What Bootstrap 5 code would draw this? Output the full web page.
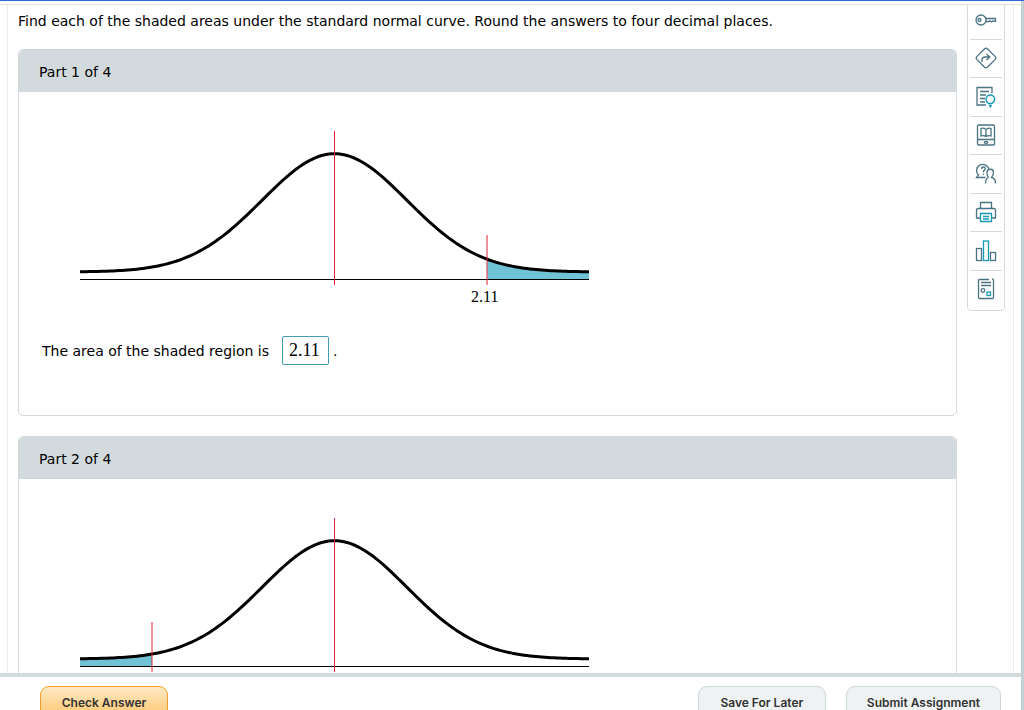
<!DOCTYPE html>
<html lang="en">
<head>
<meta charset="utf-8">
<meta name="viewport" content="width=device-width, initial-scale=1">
<title>Standard normal curve</title>
<link href="https://cdn.jsdelivr.net/npm/bootstrap@5.3.0/dist/css/bootstrap.min.css" rel="stylesheet">
<style>
  :root { --line: #d1dadd; --ink: #4b7482; --teal: #1799b5; }
  body { font-family: "DejaVu Sans", sans-serif; font-size: 14px; line-height: 20px; color: #000; border-top: 1px solid #2a6ad0; }
  .shell { border-right: 3px solid #c3d1d5; }
  .pane { margin-top: 3px; border-top: 1px solid #dfe1e4; min-height: 0; }
  .sheet { margin: 0 7px; border: solid #e6ecec; border-width: 0 1px; }
  .problem { padding: 6px 10px 0 10px; min-width: 0; }
  .question { padding-bottom: 18px; }
  .part { border-color: var(--line); border-radius: 5px; margin-bottom: 20px; }
  .part .card-header { background: #d2dadd; border-bottom: 0; padding: 12px 20px 10px; }
  .part .card-body { padding: 39px 23px 50px; }
  .plot { margin-left: 38px; max-width: 100%; }
  .plot text { font: 16px "Liberation Serif", serif; }
  .reply { margin-top: 30px; }
  .reply label { margin-right: 13px; }
  .reply input { width: 47px; height: 29px; font: 18px "Liberation Serif", serif; padding: 0 6px; border: 1px solid #439cae; border-radius: 2px; color: #000; background: #fff; }
  .tools { width: 38px; height: 311px; margin: -5px 8px 0 0; padding: 0 2px 2px; border: 1px solid var(--line); border-radius: 4px; }
  .tools button { border: 0; border-bottom: 1px solid var(--line); background: none; padding: 0; }
  .tools button:last-child { border-bottom: 0; }
  .tools svg { fill: none; stroke: var(--ink); stroke-width: 1.3; }
  .tools .hi { stroke: var(--teal); }
  .actions { height: 37px; border-top: 4px solid #d1dadd; padding: 9px 20px 0 40px; gap: 20px; }
  .act { font: 600 12px/14px "Inter", sans-serif; color: #333; min-width: 128px; height: 34px; padding: 0 20px; border: 1px solid #cdd7da; border-radius: 9px; background: #eef2f3; }
  .act.go { border-color: #f79d2c; background: linear-gradient(#ffe9c6, #fdc566); }
</style>
</head>
<body class="vh-100 overflow-hidden">
<div class="shell d-flex flex-column h-100">
  <main class="pane flex-fill overflow-hidden">
    <div class="sheet d-flex">
      <section class="problem flex-fill">
        <p class="mb-0 question">Find each of the shaded areas under the standard normal curve. Round the answers to four decimal places.</p>

        <article class="card part">
          <div class="card-header">Part 1 of 4</div>
          <div class="card-body">
            <svg class="plot d-block" width="509" height="175" viewBox="80 131 509 175" data-from="2.11" data-to="3.52" role="img" aria-label="Normal curve shaded to the right of 2.11">
              <path class="area" fill="#6fc3d5"/>
              <path d="M80 279.500H589" stroke="#000"/>
              <path class="curve" fill="none" stroke="#000" stroke-width="3"/>
              <path d="M334.500 131V285" stroke="#e0243b"/>
              <path d="M487 235V285" stroke="#e0243b"/>
              <text x="471" y="302">2.11</text>
            </svg>
            <div class="reply d-flex align-items-center">
              <label for="area1">The area of the shaded region is</label>
              <input id="area1" class="me-1" type="text" value="2.11">.
            </div>
          </div>
        </article>

        <article class="card part">
          <div class="card-header">Part 2 of 4</div>
          <div class="card-body">
            <svg class="plot d-block" width="509" height="175" viewBox="80 131 509 175" data-from="-3.52" data-to="-2.52" role="img" aria-label="Normal curve shaded in the left tail">
              <path class="area" fill="#6fc3d5"/>
              <path d="M80 279.500H589" stroke="#000"/>
              <path class="curve" fill="none" stroke="#000" stroke-width="3"/>
              <path d="M334.500 131V285" stroke="#e0243b"/>
              <path d="M152 235V285" stroke="#e0243b"/>
            </svg>
          </div>
        </article>
      </section>

      <nav class="tools d-flex flex-column flex-shrink-0" aria-label="Assignment tools">
        <button class="flex-fill d-flex align-items-center justify-content-center" aria-label="Answer key"><svg width="22" height="22" viewBox="0 0 22 22"><circle cx="6" cy="11" r="5"/><circle cx="4.500" cy="11" r="1.500"/><path d="M10.500 9.500H20.500V12.300H19.500L18 11.800L16.500 13L15 11.800L13.500 12.500H10.500"/></svg></button>
        <button class="flex-fill d-flex align-items-center justify-content-center" aria-label="Go to"><svg width="22" height="22" viewBox="0 0 22 22"><path d="M9.600 1.800Q11 .6 12.400 1.800L20.200 9.600Q21.400 11 20.200 12.400L12.400 20.200Q11 21.400 9.600 20.200L1.800 12.400Q.6 11 1.800 9.600Z"/><path d="M7 15V13Q7 10 10 10H14.500M11.500 7L14.800 10L11.500 13"/></svg></button>
        <button class="flex-fill d-flex align-items-center justify-content-center" aria-label="Hint"><svg width="22" height="22" viewBox="0 0 22 22"><path d="M17 7V1.500H2V19H11M5 5.500H14M5 9H11M5 12.500H10M5 16H10"/><path class="hi" stroke-width="1.500" d="M13.500 17.500Q11 15.500 11 13.200A4.300 4.300 0 0 1 19.600 13.200Q19.600 15.500 17 17.500Z"/><path class="hi" d="M14 19.500H16.700M14.500 20.800H16.200"/></svg></button>
        <button class="flex-fill d-flex align-items-center justify-content-center" aria-label="eBook"><svg width="22" height="22" viewBox="0 0 22 22"><rect x="2.500" y="1" width="17" height="20" rx="1"/><path d="M2.500 15.500H19.500M11 5.500V12.500M11 5.500Q8.500 3.500 6 4.500V12Q8.500 11 11 12.500Q13.500 11 16 12V4.500Q13.500 3.500 11 5.500"/><ellipse cx="11" cy="18.300" rx="1.800" ry="1"/></svg></button>
        <button class="flex-fill d-flex align-items-center justify-content-center" aria-label="Ask instructor"><svg width="22" height="22" viewBox="0 0 22 22"><path d="M13.800 6A6.200 6.200 0 1 0 3.500 12L1.500 14.500H10.500"/><path d="M6.500 6Q6.500 4 8.300 4Q10.200 4 10.200 5.800Q10.200 7 8.500 8V9.500M8.500 10.800V12"/><path d="M13.500 14.500Q11.500 12 12 9A3.300 3.300 0 0 1 18.500 9Q18.500 12 16.500 14.500Q20.500 15 20.500 20.500M13.500 14.500Q10.500 15.500 10.500 20.500"/></svg></button>
        <button class="flex-fill d-flex align-items-center justify-content-center" aria-label="Print"><svg width="22" height="22" viewBox="0 0 22 22"><path d="M5.500 7.500V1.500H16.500V7.500M5 17H1.500V9Q1.500 7.500 3 7.500H19Q20.500 7.500 20.500 9V17H17"/><path class="hi" d="M5.500 12.500H16.500V20.500H5.500ZM8 15.500H14M8 18H14"/></svg></button>
        <button class="flex-fill d-flex align-items-center justify-content-center" aria-label="Statistics"><svg width="22" height="22" viewBox="0 0 22 22"><rect x="1.500" y="8.500" width="5" height="12"/><rect class="hi" x="8.500" y="1" width="5" height="19.500"/><rect x="15.500" y="12.500" width="5" height="8"/></svg></button>
        <button class="flex-fill d-flex align-items-center justify-content-center" aria-label="Formula sheet"><svg width="22" height="22" viewBox="0 0 22 22"><path d="M14 1.500H4.500Q3.500 1.500 3.500 2.500V19.500Q3.500 20.500 4.500 20.500H17.500Q18.500 20.500 18.500 19.500V2.500Q18.500 1 17 1M6 4.500H16M6 7.500H16"/><circle cx="8" cy="12.500" r="1.800"/><rect class="hi" x="12" y="14" width="3.500" height="3.500"/></svg></button>
      </nav>
    </div>
  </main>

  <footer class="actions d-flex align-items-start overflow-hidden flex-shrink-0">
    <button class="act go me-auto">Check Answer</button>
    <button class="act">Save For Later</button>
    <button class="act">Submit Assignment</button>
  </footer>
</div>
<script src="https://cdn.jsdelivr.net/npm/bootstrap@5.3.0/dist/js/bootstrap.bundle.min.js"></script>
<script>
  // Plot the bell curve and the shaded area of each figure.
  const mean = 334.5, sigma = 72.4, tail = 272, peak = 118.3;
  const height = x => tail - peak * Math.exp(-(((x - mean) / sigma) ** 2) / 2);
  function trace(a, b) {
    const points = [];
    for (let x = a; x < b; x += 3) points.push(x + " " + height(x).toFixed(2));
    points.push(b + " " + height(b).toFixed(2));
    return points.join("L");
  }
  document.querySelectorAll(".plot").forEach(plot => {
    const a = Math.max(80, mean + sigma * plot.dataset.from);
    const b = Math.min(589, mean + sigma * plot.dataset.to);
    plot.querySelector(".curve").setAttribute("d", "M" + trace(80, 589));
    plot.querySelector(".area").setAttribute("d", "M" + a + " 279L" + trace(a, b) + "L" + b + " 279Z");
  });
</script>
</body>
</html>
